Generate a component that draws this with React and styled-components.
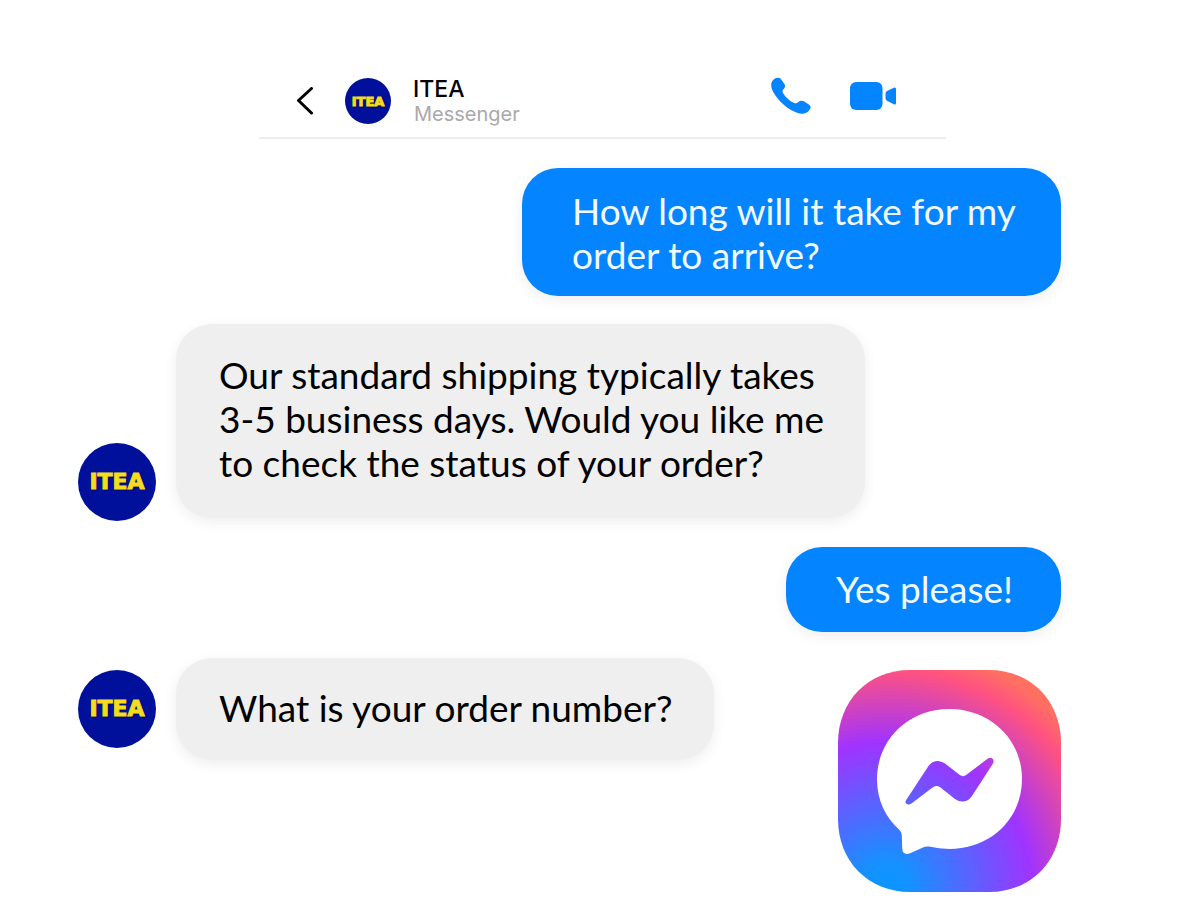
import React from "react";
import styled, { createGlobalStyle } from "styled-components";

const BLUE = "#0584ff";

const GlobalStyle = createGlobalStyle`
  *, *::before, *::after { box-sizing: border-box; }
  body {
    margin: 0;
    background: #ffffff;
    color: #000000;
    font-family: Lato, "Liberation Sans", sans-serif;
  }
`;

const Page = styled.main`
  padding: 65px 139px 20px 78px;
`;

const Header = styled.header`
  display: flex;
  align-items: center;
  margin: 0 115px 0 181px;
  padding: 0 48px 0 36px;
  height: 74px;
  border-bottom: 2px solid #ededee;
`;

const IconButton = styled.button`
  display: flex;
  padding: 0;
  border: 0;
  background: none;
  color: ${(p) => p.$color || "#000000"};
  cursor: pointer;
`;

const Avatar = styled.div`
  flex: none;
  display: flex;
  align-items: center;
  justify-content: center;
  width: ${(p) => (p.$small ? 46 : 78)}px;
  height: ${(p) => (p.$small ? 46 : 78)}px;
  border-radius: 50%;
  background: #00109a;
  color: #f5dc1e;
  font: 700 ${(p) => (p.$small ? 13 : 22)}px/1 "DejaVu Sans", sans-serif;
  -webkit-text-stroke: 1px #f5dc1e;
  text-shadow: 1px 1px 2px #00083f;
`;

const Contact = styled.div`
  display: flex;
  align-items: center;
  flex: 1;
  gap: 22px;
  margin-left: 30px;
  font-family: Inter, "Liberation Sans", sans-serif;
`;

const Name = styled.h1`
  margin: 0;
  font-size: 23px;
  font-weight: 500;
  line-height: 26px;
`;

const Service = styled.p`
  margin: 0;
  padding-left: 1px;
  color: #a9a9ab;
  font-size: 20px;
  line-height: 24px;
`;

const Actions = styled.div`
  display: flex;
  align-items: center;
  gap: 38px;
  padding-bottom: 10px;
`;

const Thread = styled.div`
  display: flex;
  flex-direction: column;
  padding-top: 29px;
`;

const Row = styled.div`
  display: flex;
  align-items: ${(p) => p.$align || "flex-start"};
  justify-content: ${(p) => (p.$sent ? "flex-end" : "flex-start")};
  gap: 20px;
  margin-bottom: ${(p) => p.$after || 0}px;
`;

const Bubble = styled.p`
  margin: 0;
  border-radius: 36px;
  font-size: 37px;
  line-height: 44px;
  box-shadow: 0 4px 14px rgba(0, 0, 0, 0.07);
`;

const Sent = styled(Bubble)`
  max-width: 539px;
  padding: ${(p) => (p.$short ? "20px 48px 21px 50px" : "21px 42px 19px 50px")};
  background: ${BLUE};
  color: #f0fbff;
`;

const Received = styled(Bubble)`
  max-width: 689px;
  padding: ${(p) => (p.$short ? "28px 41px 30px 43px" : "29px 40px 33px 43px")};
  margin-bottom: ${(p) => (p.$short ? 0 : 3)}px;
  background: #efefef;
`;

const Footer = styled.div`
  display: flex;
  align-items: flex-start;
  justify-content: space-between;
`;

const AppLogo = styled.svg`
  flex: none;
  width: 223px;
  height: 222px;
  margin-top: 12px;
`;

function MessengerLogo() {
  return (
    <AppLogo viewBox="0 0 223 222" role="img" aria-label="Messenger">
      <defs>
        <radialGradient id="brand" gradientUnits="userSpaceOnUse" cx="48" cy="218" r="243">
          <stop offset="0" stopColor="#0a95ff" />
          <stop offset="0.1" stopColor="#1492ff" />
          <stop offset="0.6" stopColor="#a033ff" />
          <stop offset="0.9" stopColor="#ff5280" />
          <stop offset="1" stopColor="#ff7061" />
        </radialGradient>
      </defs>
      <path
        fill="url(#brand)"
        d="M72 0H151C193 0 223 31 223 73V149C223 191 193 222 151 222H72C30 222 0 191 0 149V73C0 31 30 0 72 0Z"
      />
      <path
        fill="#fff"
        d="M111.500 39C70.500 39 39 69.500 39 109.500C39 130 47.500 147.500 61.500 160Q63.700 162 63.800 165L64.200 178Q64.500 185.500 71.500 183.500L85 177.500Q88 176 91 176.600Q101 179 111.500 179C152.500 179 184 149 184 109C184 69.500 152.500 39 111.500 39Z"
      />
      <path
        fill="url(#brand)"
        d="M68.200 130L89.500 97.500C93.500 90.500 100.500 89 107 93.500L121.500 104.800Q125 107.500 128.500 104.800L149.500 88.800C153.500 86 157.500 90 154.700 94L133.800 126.200C130 132 123 133.200 117 129L101.800 117Q98.500 114.800 95.200 117L73.500 133.600C70 136 65.800 133.500 68.200 130Z"
      />
    </AppLogo>
  );
}

export default function App() {
  return (
    <>
      <GlobalStyle />
      <Page>
        <Header>
          <IconButton type="button" aria-label="Back">
            <svg width="20" height="28" viewBox="0 0 20 28" fill="none" stroke="currentColor" strokeWidth="3" strokeLinecap="round" strokeLinejoin="round">
              <path d="M16.500 1.500L3.500 13.500L16.500 26" />
            </svg>
          </IconButton>
          <Contact>
            <Avatar $small aria-hidden="true">ITEA</Avatar>
            <div>
              <Name>ITEA</Name>
              <Service>Messenger</Service>
            </div>
          </Contact>
          <Actions>
            <IconButton type="button" aria-label="Call" $color={BLUE}>
              <svg width="41" height="38" viewBox="0 0 41 38" fill="currentColor">
                <path d="M2.200 2.900C4.600 0.400 8.100 0 10 2.200L13.300 6.800C14.800 9.100 13.900 11 12.200 12.600C11.200 13.600 11.400 15 12.600 16.900C15 20.500 18.700 23.800 22.700 25.700C24.900 26.700 26 26.300 27.300 25C29 23.400 31 23.300 32.900 24.200L37.800 27.400C40.200 29 40.100 31 38.400 33C35.600 36.900 31.100 37.500 26.100 35.800C17 32.600 7 24 2.200 15C-0.200 10.400 -0.700 5.800 2.200 2.900Z" />
              </svg>
            </IconButton>
            <IconButton type="button" aria-label="Video call" $color={BLUE}>
              <svg width="48" height="30" viewBox="0 0 48 30" fill="currentColor">
                <rect x="0" y="1" width="32.500" height="28" rx="6" />
                <path d="M35.500 12.500Q35.500 10.600 37 10L43.800 6.700Q46 5.800 46 8V22Q46 24.300 43.800 23.300L37 19.800Q35.500 19 35.500 17.500Z" />
              </svg>
            </IconButton>
          </Actions>
        </Header>

        <Thread>
          <Row $sent $after={28}>
            <Sent>How long will it take for my order to arrive?</Sent>
          </Row>
          <Row $align="flex-end" $after={26}>
            <Avatar aria-hidden="true">ITEA</Avatar>
            <Received>
              Our standard shipping typically takes 3-5 business days. Would you like me to check the
              status of your order?
            </Received>
          </Row>
          <Row $sent $after={26}>
            <Sent $short>Yes please!</Sent>
          </Row>
          <Footer>
            <Row $align="center">
              <Avatar aria-hidden="true">ITEA</Avatar>
              <Received $short>What is your order number?</Received>
            </Row>
            <MessengerLogo />
          </Footer>
        </Thread>
      </Page>
    </>
  );
}
